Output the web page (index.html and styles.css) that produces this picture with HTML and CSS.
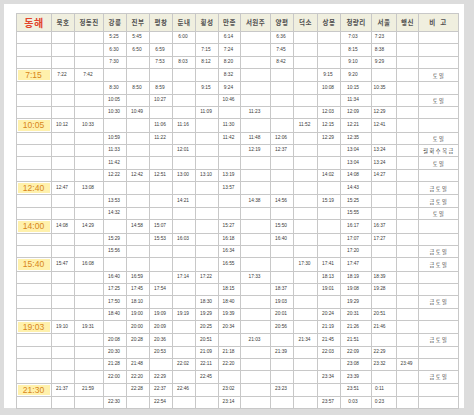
FILE: index.html
```html
<!DOCTYPE html>
<html lang="ko">
<head>
<meta charset="utf-8">
<title>동해 시간표</title>
<link rel="stylesheet" href="styles.css">
</head>
<body>
<div class="panel">
<table class="tt">
<colgroup>
<col class="w35"><col class="w23"><col class="w29"><col class="w23"><col class="w23"><col class="w23"><col class="w23"><col class="w23"><col class="w22"><col class="w30"><col class="w23"><col class="w24"><col class="w23"><col class="w31"><col class="w25"><col class="w22"><col class="w40">
</colgroup>
<thead>
<tr class="hd">
<th class="origin">동해</th><th>묵호</th><th>정동진</th><th>강릉</th><th>진부</th><th>평창</th><th>둔내</th><th>횡성</th><th>만종</th><th>서원주</th><th>양평</th><th>덕소</th><th>상봉</th><th>청량리</th><th>서울</th><th>행신</th><th class="note-h">비 고</th>
</tr>
</thead>
<tbody>
<tr><td></td><td></td><td></td><td>5:25</td><td>5:45</td><td></td><td>6:00</td><td></td><td>6:14</td><td></td><td>6:36</td><td></td><td></td><td>7:03</td><td>7:23</td><td></td><td></td></tr>
<tr><td></td><td></td><td></td><td>6:30</td><td>6:50</td><td>6:59</td><td></td><td>7:15</td><td>7:24</td><td></td><td>7:45</td><td></td><td></td><td>8:15</td><td>8:38</td><td></td><td></td></tr>
<tr><td></td><td></td><td></td><td>7:30</td><td></td><td>7:53</td><td>8:03</td><td>8:12</td><td>8:20</td><td></td><td>8:42</td><td></td><td></td><td>9:10</td><td>9:29</td><td></td><td></td></tr>
<tr><td class="dep"><span>7:15</span></td><td>7:22</td><td>7:42</td><td></td><td></td><td></td><td></td><td></td><td>8:32</td><td></td><td></td><td></td><td>9:15</td><td>9:20</td><td></td><td></td><td class="note">토일</td></tr>
<tr><td></td><td></td><td></td><td>8:30</td><td>8:50</td><td>8:59</td><td></td><td>9:15</td><td>9:24</td><td></td><td></td><td></td><td>10:08</td><td>10:15</td><td>10:35</td><td></td><td></td></tr>
<tr><td></td><td></td><td></td><td>10:05</td><td></td><td>10:27</td><td></td><td></td><td>10:46</td><td></td><td></td><td></td><td></td><td>11:34</td><td></td><td></td><td class="note">토일</td></tr>
<tr><td></td><td></td><td></td><td>10:30</td><td>10:49</td><td></td><td></td><td>11:09</td><td></td><td>11:23</td><td></td><td></td><td>12:03</td><td>12:09</td><td>12:29</td><td></td><td></td></tr>
<tr><td class="dep"><span>10:05</span></td><td>10:12</td><td>10:33</td><td></td><td></td><td>11:06</td><td>11:16</td><td></td><td>11:30</td><td></td><td></td><td>11:52</td><td>12:15</td><td>12:21</td><td>12:41</td><td></td><td></td></tr>
<tr><td></td><td></td><td></td><td>10:59</td><td></td><td>11:22</td><td></td><td></td><td>11:42</td><td>11:48</td><td>12:06</td><td></td><td>12:29</td><td>12:35</td><td></td><td></td><td class="note">토일</td></tr>
<tr><td></td><td></td><td></td><td>11:33</td><td></td><td></td><td>12:01</td><td></td><td></td><td>12:19</td><td>12:37</td><td></td><td></td><td>13:04</td><td>13:24</td><td></td><td class="note">월화수목금</td></tr>
<tr><td></td><td></td><td></td><td>11:42</td><td></td><td></td><td></td><td></td><td></td><td></td><td></td><td></td><td></td><td>13:04</td><td>13:24</td><td></td><td class="note">토일</td></tr>
<tr><td></td><td></td><td></td><td>12:22</td><td>12:42</td><td>12:51</td><td>13:00</td><td>13:10</td><td>13:19</td><td></td><td></td><td></td><td>14:02</td><td>14:08</td><td>14:27</td><td></td><td></td></tr>
<tr><td class="dep"><span>12:40</span></td><td>12:47</td><td>13:08</td><td></td><td></td><td></td><td></td><td></td><td>13:57</td><td></td><td></td><td></td><td></td><td>14:43</td><td></td><td></td><td class="note">금토일</td></tr>
<tr><td></td><td></td><td></td><td>13:53</td><td></td><td></td><td>14:21</td><td></td><td></td><td>14:38</td><td>14:56</td><td></td><td>15:19</td><td>15:25</td><td></td><td></td><td class="note">금토일</td></tr>
<tr><td></td><td></td><td></td><td>14:32</td><td></td><td></td><td></td><td></td><td></td><td></td><td></td><td></td><td></td><td>15:55</td><td></td><td></td><td class="note">토일</td></tr>
<tr><td class="dep"><span>14:00</span></td><td>14:08</td><td>14:29</td><td></td><td>14:58</td><td>15:07</td><td></td><td></td><td>15:27</td><td></td><td>15:50</td><td></td><td></td><td>16:17</td><td>16:37</td><td></td><td></td></tr>
<tr><td></td><td></td><td></td><td>15:29</td><td></td><td>15:53</td><td>16:03</td><td></td><td>16:18</td><td></td><td>16:40</td><td></td><td></td><td>17:07</td><td>17:27</td><td></td><td></td></tr>
<tr><td></td><td></td><td></td><td>15:56</td><td></td><td></td><td></td><td></td><td>16:34</td><td></td><td></td><td></td><td></td><td>17:20</td><td></td><td></td><td class="note">금토일</td></tr>
<tr><td class="dep"><span>15:40</span></td><td>15:47</td><td>16:08</td><td></td><td></td><td></td><td></td><td></td><td>16:55</td><td></td><td></td><td>17:30</td><td>17:41</td><td>17:47</td><td></td><td></td><td class="note">금토일</td></tr>
<tr><td></td><td></td><td></td><td>16:40</td><td>16:59</td><td></td><td>17:14</td><td>17:22</td><td></td><td>17:33</td><td></td><td></td><td>18:13</td><td>18:19</td><td>18:39</td><td></td><td></td></tr>
<tr><td></td><td></td><td></td><td>17:25</td><td>17:45</td><td>17:54</td><td></td><td></td><td>18:15</td><td></td><td>18:37</td><td></td><td>19:01</td><td>19:08</td><td>19:28</td><td></td><td></td></tr>
<tr><td></td><td></td><td></td><td>17:50</td><td>18:10</td><td></td><td></td><td>18:30</td><td>18:40</td><td></td><td>19:03</td><td></td><td></td><td>19:29</td><td></td><td></td><td class="note">금토일</td></tr>
<tr><td></td><td></td><td></td><td>18:40</td><td>19:00</td><td>19:09</td><td>19:19</td><td>19:29</td><td>19:39</td><td></td><td>20:01</td><td></td><td>20:24</td><td>20:31</td><td>20:51</td><td></td><td></td></tr>
<tr><td class="dep"><span>19:03</span></td><td>19:10</td><td>19:31</td><td></td><td>20:00</td><td>20:09</td><td></td><td>20:25</td><td>20:34</td><td></td><td>20:56</td><td></td><td>21:19</td><td>21:26</td><td>21:46</td><td></td><td></td></tr>
<tr><td></td><td></td><td></td><td>20:08</td><td>20:28</td><td>20:36</td><td></td><td>20:51</td><td></td><td>21:03</td><td></td><td>21:34</td><td>21:45</td><td>21:51</td><td></td><td></td><td class="note">금토일</td></tr>
<tr><td></td><td></td><td></td><td>20:30</td><td></td><td>20:53</td><td></td><td>21:09</td><td>21:18</td><td></td><td>21:39</td><td></td><td>22:03</td><td>22:09</td><td>22:29</td><td></td><td></td></tr>
<tr><td></td><td></td><td></td><td>21:28</td><td>21:48</td><td></td><td>22:02</td><td>22:11</td><td>22:20</td><td></td><td></td><td></td><td></td><td>23:08</td><td>23:32</td><td>23:49</td><td></td></tr>
<tr><td></td><td></td><td></td><td>22:00</td><td>22:20</td><td>22:29</td><td></td><td>22:45</td><td></td><td></td><td></td><td></td><td>23:34</td><td>23:39</td><td></td><td></td><td class="note">금토일</td></tr>
<tr><td class="dep"><span>21:30</span></td><td>21:37</td><td>21:59</td><td></td><td>22:28</td><td>22:37</td><td>22:46</td><td></td><td>23:02</td><td></td><td>23:23</td><td></td><td></td><td>23:51</td><td>0:11</td><td></td><td></td></tr>
<tr><td></td><td></td><td></td><td>22:30</td><td></td><td>22:54</td><td></td><td></td><td>23:14</td><td></td><td></td><td></td><td>23:57</td><td>0:03</td><td>0:23</td><td></td><td></td></tr>
</tbody>
</table>
</div>
</body>
</html>
```

FILE: styles.css
```css
html, body {
  margin: 0;
  padding: 0;
  width: 474px;
  height: 415px;
  background: #dcdcdc;
  overflow: hidden;
}

.panel {
  margin: 4px 0 0 4px;
  width: 460px;
  height: 404px;
  box-sizing: border-box;
  padding: 9px 0 0 12px;
  background: #ffffff;
}

.tt {
  border-collapse: collapse;
  table-layout: fixed;
  width: 443px;
  border: 1px solid #8c8c8c;
  font-family: "Liberation Sans", "Noto Sans CJK KR", sans-serif;
  color: #3a3a3a;
}

.w22 { width: 22px; }
.w23 { width: 23px; }
.w24 { width: 24px; }
.w25 { width: 25px; }
.w29 { width: 29px; }
.w30 { width: 30px; }
.w31 { width: 31px; }
.w35 { width: 35px; }
.w40 { width: 40px; }

.tt th,
.tt td {
  border: 1px solid #c8c8c8;
  padding: 0 2px 0 0;
  text-align: center;
  vertical-align: middle;
  line-height: 1;
  white-space: nowrap;
  overflow: hidden;
}

.hd {
  height: 18px;
}

.tt th {
  background: #f0efdf;
  font-family: "Noto Sans CJK KR", sans-serif;
  font-size: 6.5px;
  font-weight: 700;
  color: #505050;
  letter-spacing: 0.4px;
  padding: 0;
}

.tt th.origin {
  font-size: 10px;
  color: #e2432b;
  letter-spacing: 0.5px;
}

.tt th.note-h {
  letter-spacing: 1.5px;
}

.tt tbody tr {
  height: 12.37px;
}

.tt td {
  font-size: 4.8px;
}

.tt td:nth-child(14) { padding-right: 6px; }
.tt td:nth-child(15) { padding-right: 9px; }

.tt td.dep {
  padding: 1px;
}

.tt td.dep span {
  display: block;
  background: #fff1ac;
  color: #d8861a;
  font-size: 8.5px;
  line-height: 10.3px;
  padding-right: 1px;
}

.tt td.note {
  font-family: "Noto Sans CJK KR", sans-serif;
  font-size: 5.2px;
  letter-spacing: 1.5px;
  color: #404040;
  padding: 0 0 0 1px;
}
```
